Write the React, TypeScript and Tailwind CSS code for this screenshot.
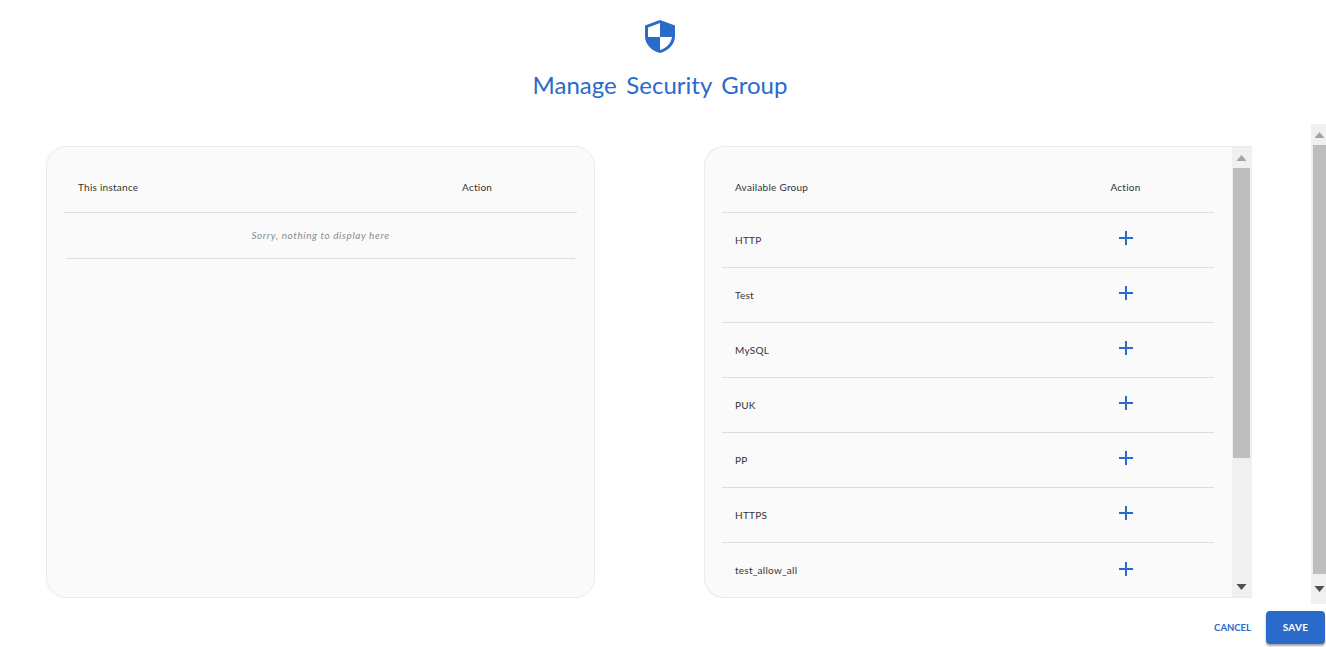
const groups = ["HTTP", "Test", "MySQL", "PUK", "PP", "HTTPS", "test_allow_all"];

function Up({ color = "#a3a3a3" }: { color?: string }) {
  return (
    <svg width="11" height="6" viewBox="0 0 11 6">
      <path d="M5.5 0 L10.5 6 L0.5 6 Z" fill={color} />
    </svg>
  );
}

function Down({ color = "#505050" }: { color?: string }) {
  return (
    <svg width="11" height="6" viewBox="0 0 11 6">
      <path d="M0.5 0 L10.5 0 L5.5 6 Z" fill={color} />
    </svg>
  );
}

function Plus() {
  return (
    <svg width="14" height="14" viewBox="0 0 14 14" className="text-[#2a6acb]">
      <path d="M7 0v14M0 7h14" stroke="currentColor" strokeWidth="2" fill="none" />
    </svg>
  );
}

function Shield() {
  return (
    <svg width="30" height="33" viewBox="0 0 30 33">
      <path
        fillRule="evenodd"
        fill="#2a6acb"
        d="M15 0 L30 5.5 V16 C30 24 24 30.5 15 33 C6 30.5 0 24 0 16 V5.5 Z M15 3 L3 7.4 V17 H15 Z M15 17 V30 C21.5 28 26 23.5 27 17 Z"
      />
    </svg>
  );
}

export default function App() {
  return (
    <div className="flex h-[647px] w-full flex-col overflow-hidden bg-white font-['Lato',sans-serif] text-[#333]">
      <header className="flex h-[124px] flex-col items-center pr-[6px] pt-5">
        <Shield />
        <h1 className="mt-[14px] text-[24px] leading-[36px] text-[#2a6acb] [word-spacing:3.5px]">Manage Security Group</h1>
      </header>

      <div className="flex h-[480px]">
        <div className="flex flex-1 gap-[109px] pl-[46px] pt-[22px]">
          <section className="h-[452px] w-[549px] rounded-[20px] border border-[#e9e9e9] bg-[#fafafa] pl-[17px] pr-[17px]">
            <div className="flex h-[66px] items-end border-b border-[#dedede] pb-[19px] pl-[14px] text-[10px] leading-[12px] tracking-[0.25px]">
              <span className="w-[384px]">This instance</span>
              <span>Action</span>
            </div>
            <div className="mx-[2px] flex h-[46px] items-center justify-center border-b border-[#dedede] text-[10px] italic tracking-[0.6px] text-[#8c8c8c]">
              Sorry, nothing to display here
            </div>
          </section>

          <section className="flex h-[452px] w-[548px] overflow-hidden rounded-l-[20px] border border-r-0 border-[#e9e9e9] bg-[#fafafa]">
            <div className="flex-1 overflow-hidden pl-[17px] pr-[18px]">
              <div className="flex h-[66px] items-end border-b border-[#dedede] pb-[19px] text-[10px] leading-[12px] tracking-[0.25px]">
                <span className="w-[342px] pl-[13px]">Available Group</span>
                <span className="w-[123px] text-center">Action</span>
              </div>
              {groups.map((g, i) => (
                <div
                  key={g}
                  className={
                    i === groups.length - 1
                      ? "flex h-[55px] items-center text-[10px] tracking-[0.25px]"
                      : "flex h-[55px] items-center border-b border-[#dedede] text-[10px] tracking-[0.25px]"
                  }
                >
                  <span className="w-[342px] pl-[13px]">{g}</span>
                  <span className="flex w-[123px] justify-center pb-[4px]">
                    <Plus />
                  </span>
                </div>
              ))}
            </div>
            <div className="flex w-[20px] flex-col items-center bg-[#f0f0f0] pl-[1px] pr-[2px]">
              <div className="flex h-[21px] w-full items-center justify-center"><Up /></div>
              <div className="h-[290px] w-full bg-[#bebebe]" />
              <div className="flex flex-1 items-end justify-center pb-[7px]"><Down /></div>
            </div>
          </section>
        </div>

        <div className="flex w-[15px] flex-col items-center bg-[#f0f0f0] pl-[2px]">
          <div className="flex h-[21px] w-full items-center justify-center"><Up /></div>
          <div className="h-[429px] w-full bg-[#bebebe]" />
          <div className="flex flex-1 items-center justify-center"><Down /></div>
        </div>
      </div>

      <footer className="flex items-start justify-end pr-[1px] pt-[7px]">
        <button className="mr-[15px] mt-[10px] text-[9.5px] font-bold leading-[14px] text-[#2a6acb]">CANCEL</button>
        <button className="h-[33px] w-[59px] rounded-[4px] bg-[#2a6acb] text-[10px] font-bold tracking-[0.3px] text-white shadow-[0_2px_2px_rgba(0,0,0,0.35)]">SAVE</button>
      </footer>
    </div>
  );
}
